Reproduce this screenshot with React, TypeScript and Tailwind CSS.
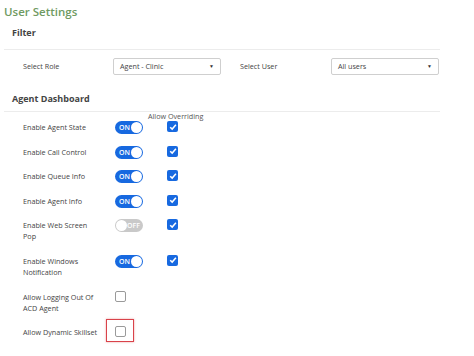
import { useState } from "react"

type Row = {
  label: string[]
  toggle?: boolean
  override?: boolean
  box?: boolean
  highlight?: boolean
}

const rows: Row[] = [
  { label: ["Enable Agent State"], toggle: true, override: true },
  { label: ["Enable Call Control"], toggle: true, override: true },
  { label: ["Enable Queue Info"], toggle: true, override: true },
  { label: ["Enable Agent Info"], toggle: true, override: true },
  { label: ["Enable Web Screen", "Pop"], toggle: false, override: true },
  { label: ["Enable Windows", "Notification"], toggle: true, override: true },
  { label: ["Allow Logging Out Of", "ACD Agent"], box: true },
  { label: ["Allow Dynamic Skillset"], box: true, highlight: true },
]

function Toggle({ on }: { on: boolean }) {
  return on ? (
    <div className="flex items-center justify-between w-[28px] h-[13px] rounded-full bg-[#1769e0] pl-[4px] pr-[1px]">
      <span className="text-[7px] leading-none text-white font-semibold">ON</span>
      <span className="w-[11px] h-[11px] rounded-full bg-white" />
    </div>
  ) : (
    <div className="flex items-center justify-between w-[28px] h-[13px] rounded-full bg-[#c9c9c9] pl-[1px] pr-[3px]">
      <span className="w-[11px] h-[11px] rounded-full bg-white" />
      <span className="text-[7px] leading-none text-white font-semibold">OFF</span>
    </div>
  )
}

function Check({ checked }: { checked: boolean }) {
  if (!checked) return <div className="w-[11px] h-[11px] rounded-[2px] border border-[#9a9a9a] bg-white" />
  return (
    <div className="w-[11px] h-[11px] rounded-[2px] bg-[#1769e0] flex items-center justify-center">
      <svg width="8" height="8" viewBox="0 0 8 8">
        <path d="M1.2 4.2 L3.2 6.1 L6.9 1.8" stroke="white" strokeWidth="1.5" fill="none" />
      </svg>
    </div>
  )
}

function Select({ value }: { value: string }) {
  return (
    <div className="flex items-center justify-between w-[108px] h-[17px] border border-[#cfcfcf] rounded-[2px] px-[6px] bg-white">
      <span className="text-[7.2px] text-[#444]">{value}</span>
      <span className="text-[5px] text-[#333]">▼</span>
    </div>
  )
}

export default function App() {
  const [items] = useState(rows)

  return (
    <div className="w-[474px] h-[356px] bg-white overflow-hidden text-[#4a4a4a]" style={{ fontFamily: '"Open Sans", sans-serif' }}>
      <h1 className="pl-[4px] pt-[3px] text-[11.5px] leading-[18px] font-semibold text-[#6f9a62]">User Settings</h1>
      <h2 className="pl-[12px] mt-[5px] text-[9px] leading-[14px] font-bold text-[#444]">Filter</h2>
      <div className="ml-[4px] w-[436px] mt-[9px] border-b border-[#ececec]" />

      <div className="flex items-center mt-[8px] h-[17px]">
        <span className="pl-[23px] w-[113px] text-[7.2px] text-[#444]">Select Role</span>
        <Select value="Agent - Clinic" />
        <span className="pl-[19px] w-[110px] text-[7.2px] text-[#444]">Select User</span>
        <Select value="All users" />
      </div>

      <h2 className="pl-[12px] mt-[17px] text-[9px] leading-[14px] font-bold text-[#444]">Agent Dashboard</h2>
      <div className="ml-[4px] w-[436px] mt-[5px] border-b border-[#ececec]" />

      <div className="pl-[148px] -mt-[1px] text-[7.2px] leading-[10px] text-[#555]">Allow Overriding</div>

      <div className="flex flex-col gap-y-[11.6px]">
        {items.map(r => (
          <div key={r.label.join(" ")} className={`flex items-start ${r.label.length > 1 ? "min-h-[24px]" : ""}`}>
            <div className="pl-[23px] w-[115px] text-[7.2px] leading-[11px] text-[#444] pt-[1px]">
              {r.label.map(l => <div key={l}>{l}</div>)}
            </div>
            {r.box ? (
              <div className="relative">
                <Check checked={false} />
                {r.highlight && (
                  <div className="absolute -left-[9px] -top-[7px] w-[28px] h-[23px] border border-[#d9434a] shadow-[0_0_2px_rgba(217,67,74,0.5)]" />
                )}
              </div>
            ) : (
              <>
                <Toggle on={!!r.toggle} />
                <div className="ml-[24px]">
                  <Check checked={!!r.override} />
                </div>
              </>
            )}
          </div>
        ))}
      </div>
    </div>
  )
}
